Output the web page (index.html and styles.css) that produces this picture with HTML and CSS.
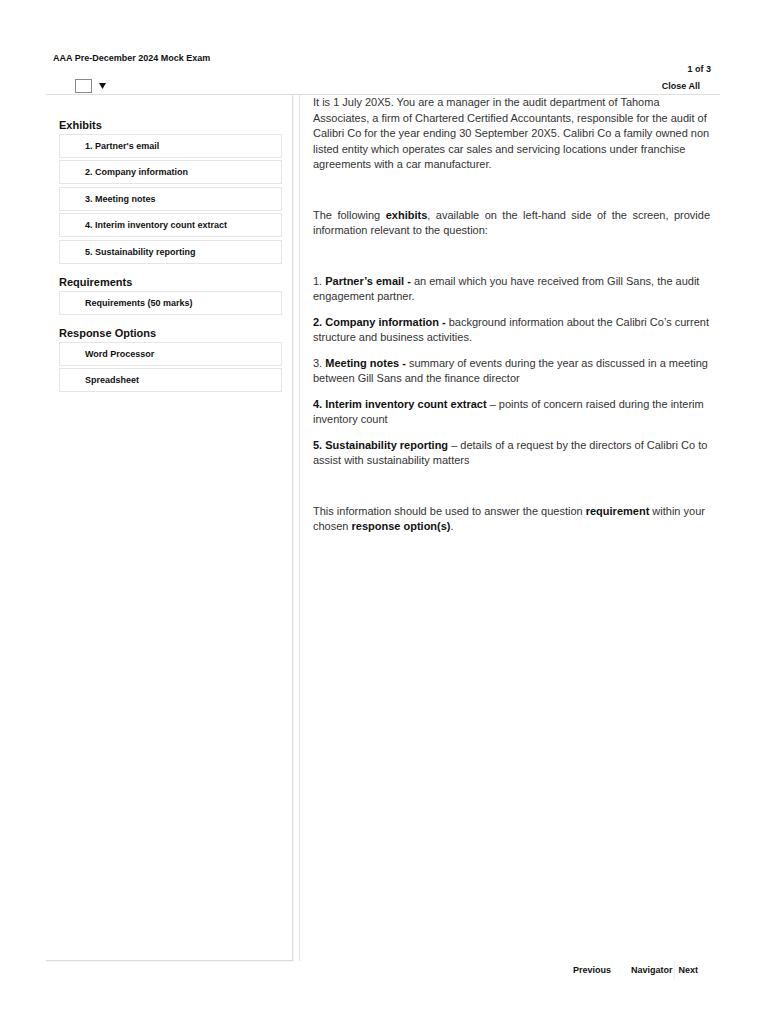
FILE: index.html
```html
<!DOCTYPE html>
<html>
<head>
<meta charset="utf-8">
<link rel="stylesheet" href="styles.css">
</head>
<body>
<div class="page">
  <div class="title">AAA Pre-December 2024 Mock Exam</div>
  <div class="topbar">
    <div class="pager">1 of 3</div>
    <div class="toolrow">
      <div class="tools">
        <span class="checkbox"></span>
        <svg class="caret" width="7" height="6" viewBox="0 0 7 6"><path d="M0 0H7L3.5 6Z" fill="#111"/></svg>
      </div>
      <div class="closeall">Close All</div>
    </div>
  </div>
  <div class="columns">
    <aside class="sidebar">
      <div class="group-title">Exhibits</div>
      <div class="items">
        <div class="item">1. Partner's email</div>
        <div class="item">2. Company information</div>
        <div class="item">3. Meeting notes</div>
        <div class="item">4. Interim inventory count extract</div>
        <div class="item">5. Sustainability reporting</div>
      </div>
      <div class="group-title">Requirements</div>
      <div class="items">
        <div class="item">Requirements (50 marks)</div>
      </div>
      <div class="group-title">Response Options</div>
      <div class="items">
        <div class="item">Word Processor</div>
        <div class="item">Spreadsheet</div>
      </div>
    </aside>
    <main class="content">
      <p class="big-gap">It is 1 July 20X5. You are a manager in the audit department of Tahoma Associates, a firm of Chartered Certified Accountants, responsible for the audit of Calibri Co for the year ending 30 September 20X5. Calibri Co a family owned non listed entity which operates car sales and servicing locations under franchise agreements with a car manufacturer.</p>
      <p class="big-gap justify">The following <b>exhibits</b>, available on the left-hand side of the screen, provide information relevant to the question:</p>
      <p>1. <b>Partner’s email -</b> an email which you have received from Gill Sans, the audit engagement partner.</p>
      <p><b>2. Company information -</b> background information about the Calibri Co’s current structure and business activities.</p>
      <p>3. <b>Meeting notes -</b> summary of events during the year as discussed in a meeting between Gill Sans and the finance director</p>
      <p><b>4. Interim inventory count extract</b> – points of concern raised during the interim inventory count</p>
      <p class="big-gap"><b>5. Sustainability reporting</b> – details of a request by the directors of Calibri Co to assist with sustainability matters</p>
      <p>This information should be used to answer the question <b>requirement</b> within your chosen <b>response option(s)</b>.</p>
    </main>
  </div>
  <div class="footer">
    <span class="nav">Previous</span>
    <span class="nav navigator">Navigator</span>
    <span class="sep"></span>
    <span class="nav">Next</span>
  </div>
</div>
</body>
</html>
```
FILE: styles.css
```css
html, body {
  margin: 0;
  padding: 0;
  background: #fff;
}
body {
  font-family: "Liberation Sans", Arial, sans-serif;
  color: #111;
}
.page {
  margin-left: 46px;
  width: 674px;
}
.title {
  padding: 53px 0 0 7px;
  font-size: 9px;
  line-height: 11px;
  font-weight: bold;
}
.topbar {
  border-bottom: 1px solid #dedede;
  height: 30px;
}
.pager {
  text-align: right;
  padding-right: 9px;
  font-size: 9px;
  line-height: 11px;
  font-weight: bold;
}
.toolrow {
  display: flex;
  justify-content: space-between;
  align-items: center;
  padding: 4px 20px 0 29px;
}
.tools {
  display: flex;
  align-items: center;
  gap: 7px;
}
.checkbox {
  display: block;
  width: 15px;
  height: 12px;
  border: 1px solid #8a8a8a;
  background: #fff;
}
.caret {
  display: block;
}
.closeall {
  font-size: 9px;
  line-height: 11px;
  font-weight: bold;
}
.columns {
  display: flex;
  gap: 6px;
  height: 866px;
}
.sidebar {
  width: 223px;
  flex: none;
  padding: 24px 10px 0 13px;
  border-right: 1px solid #dcdcdc;
  border-bottom: 1px solid #dcdcdc;
  box-shadow: 1px 1px 1px rgba(0,0,0,0.04);
}
.group-title {
  font-size: 11px;
  line-height: 13px;
  font-weight: bold;
  color: #111;
  margin-bottom: 1.5px;
}
.items {
  display: flex;
  flex-direction: column;
  gap: 2.5px;
  margin-bottom: 12.5px;
}
.item {
  height: 22px;
  border: 1px solid #e6e6e6;
  padding-left: 25px;
  font-size: 9px;
  line-height: 22px;
  font-weight: bold;
  color: #111;
}
.content {
  flex: 1;
  border-left: 1px solid #e2e2e2;
  padding: 0 10px 0 13px;
  font-size: 11px;
  line-height: 15.5px;
  color: #333;
}
.content p {
  margin: 0 0 10px;
}
.content p.big-gap {
  margin-bottom: 35px;
}
.content p.justify {
  text-align: justify;
}
.content b {
  color: #111;
}
.footer {
  display: flex;
  justify-content: flex-end;
  align-items: center;
  padding-right: 22px;
  height: 18px;
}
.nav {
  font-size: 9px;
  line-height: 11px;
  font-weight: bold;
}
.navigator {
  margin-left: 20px;
}
.sep {
  width: 1px;
  height: 18px;
  background: #eee;
  margin: 0 3px 0 2px;
}
```
